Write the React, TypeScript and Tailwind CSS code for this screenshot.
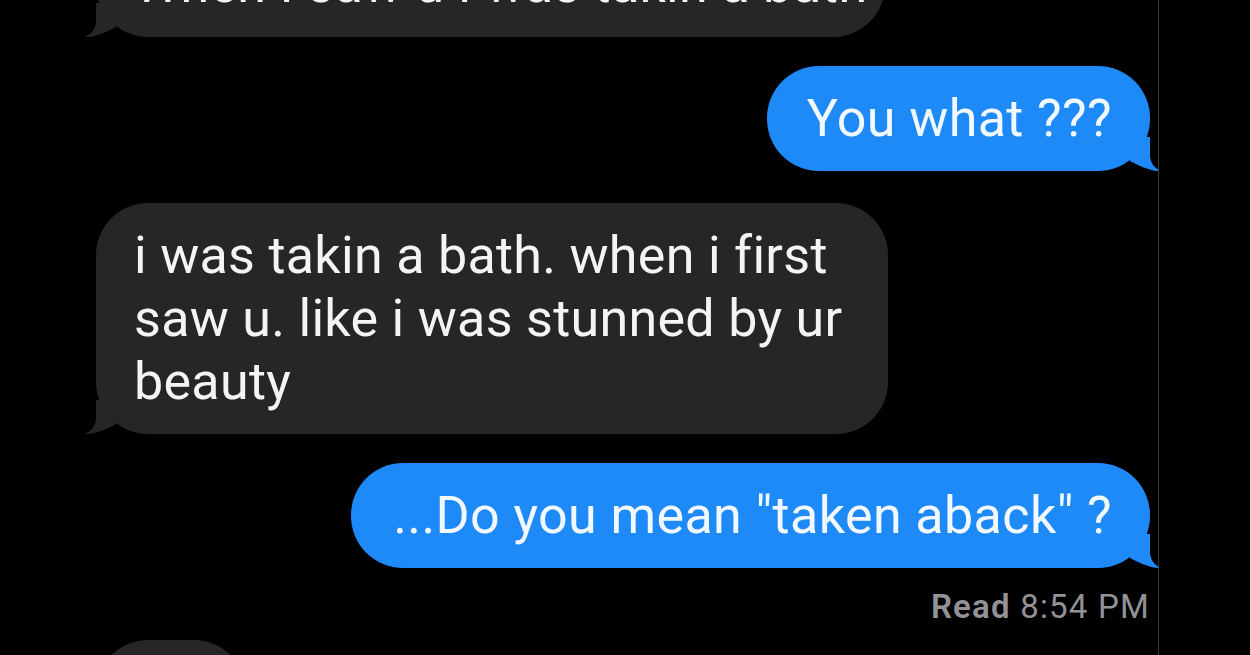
import React from "react";

function Tail({ side, color }: { side: "left" | "right"; color: string }) {
  return (
    <svg
      width="34"
      height="34"
      viewBox="0 0 34 34"
      className={
        side === "right"
          ? "absolute bottom-0 right-[-12px]"
          : "absolute bottom-0 left-[-12px] -scale-x-100"
      }
    >
      <path
        d="M0 0 L22 0 L22 18 C22 26 27 32 34 34 C27 34.6 17 32 2 24 Z"
        fill={color}
      />
    </svg>
  );
}

function GreyBubble({
  children,
  className,
}: {
  children: React.ReactNode;
  className: string;
}) {
  return (
    <div
      className={
        "relative shrink-0 rounded-[52px] bg-[#262628] px-[38px] py-[21px] text-[52px] leading-[63px] tracking-[0.3px] text-[#f4f4f4] " +
        className
      }
    >
      {children}
      <Tail side="left" color="#262628" />
    </div>
  );
}

function BlueBubble({
  children,
  className,
}: {
  children: React.ReactNode;
  className: string;
}) {
  return (
    <div
      className={
        "relative shrink-0 self-end whitespace-nowrap rounded-[52px] bg-[#1e8af7] py-[21px] text-[52px] leading-[63px] tracking-[0.4px] text-[#f2f8ff] " +
        className
      }
    >
      {children}
      <Tail side="right" color="#1e8af7" />
    </div>
  );
}

export default function App() {
  return (
    <div className="flex h-[655px] w-[1250px] overflow-hidden bg-black font-['Roboto','Liberation_Sans',sans-serif]">
      <div className="flex h-[655px] w-[1158px] shrink-0 flex-col overflow-hidden pl-[96px] pr-[8px]">
        <GreyBubble className="mt-[-68px] w-[789px] whitespace-nowrap">
          When I saw u I was takin a bath
        </GreyBubble>
        <BlueBubble className="mt-[29px] pl-[40px] pr-[38px]">
          You what ???
        </BlueBubble>
        <GreyBubble className="mt-[32px] w-[792px]">
          i was takin a bath. when i first
          <br />
          saw u. like i was stunned by ur
          <br />
          beauty
        </GreyBubble>
        <BlueBubble className="mt-[29px] pl-[42px] pr-[38px]">
          ...Do you mean "taken aback" ?
        </BlueBubble>
        <div className="mt-[19px] self-end text-[33px] leading-[40px] tracking-[1.2px] text-[#929297]">
          <span className="font-semibold">Read</span> 8:54 PM
        </div>
        <GreyBubble className="mt-[13px] w-[150px]">yes</GreyBubble>
      </div>
      <div className="w-px shrink-0 bg-[#3a3a3a]" />
      <div className="flex-1 bg-black" />
    </div>
  );
}
